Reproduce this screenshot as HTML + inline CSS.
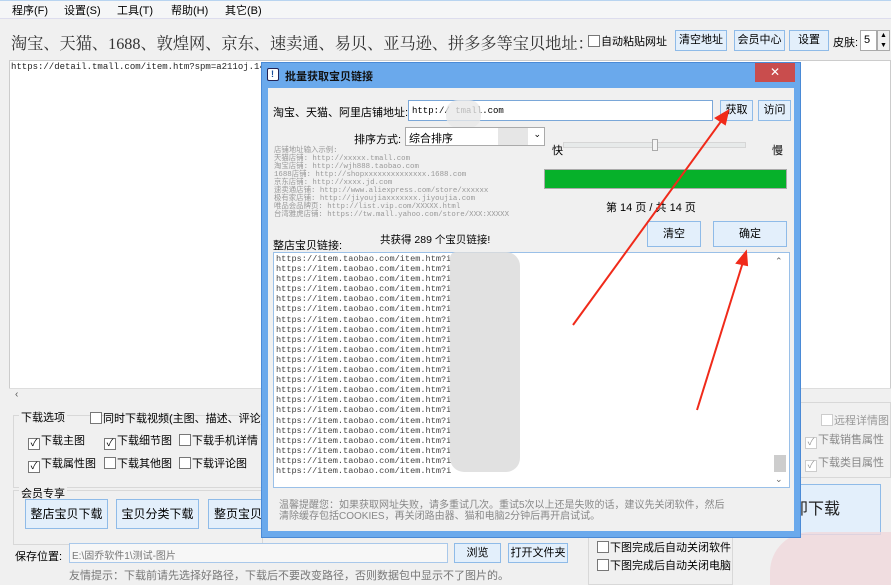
<!DOCTYPE html>
<html><head><meta charset="utf-8"><style>
*{margin:0;padding:0;box-sizing:border-box}
body{width:891px;height:585px;overflow:hidden;background:#f0f0f0;font-family:"Liberation Sans","Noto Sans CJK SC",sans-serif;font-size:11px;color:#000;position:relative}
.a{position:absolute;white-space:nowrap}
.btn{position:absolute;background:#e3effb;border:1px solid #8fbbe8;text-align:center;font-size:11px;white-space:nowrap}
.cb{display:inline-block;width:12px;height:12px;border:1px solid #777;background:#fff;vertical-align:-2px;margin-right:1px;font-size:10px;line-height:10px;text-align:center}
.mono{font-family:"Liberation Mono","Noto Sans CJK SC",monospace}
.grp{position:absolute;border:1px solid #d8d8d8}
</style></head><body>
<div class="a" style="left:0;top:0;width:891px;height:18px;background:#f5f6f7;border-top:1px solid #b8d4f0"></div>
<div class="a" style="left:12px;top:2px;font-size:11px">程序(F)</div>
<div class="a" style="left:64px;top:2px;font-size:11px">设置(S)</div>
<div class="a" style="left:117px;top:2px;font-size:11px">工具(T)</div>
<div class="a" style="left:171px;top:2px;font-size:11px">帮助(H)</div>
<div class="a" style="left:225px;top:2px;font-size:11px">其它(B)</div>
<div class="a" style="left:0;top:18px;width:891px;height:42px;background:#f0f0f0;border-top:1px solid #dde"></div>
<div class="a" style="left:11px;top:30px;font-size:16.2px;font-family:'Liberation Serif','Noto Serif CJK SC',serif;color:#333">淘宝、天猫、1688、敦煌网、京东、速卖通、易贝、亚马逊、拼多多等宝贝地址：</div>
<div class="a" style="left:588px;top:33px;font-size:11px"><span class="cb"></span>自动粘贴网址</div>
<div class="btn" style="left:675px;top:30px;width:52px;height:21px;line-height:19px">清空地址</div>
<div class="btn" style="left:734px;top:30px;width:51px;height:21px;line-height:19px">会员中心</div>
<div class="btn" style="left:789px;top:30px;width:40px;height:21px;line-height:19px">设置</div>
<div class="a" style="left:833px;top:34px">皮肤:</div>
<div class="a" style="left:860px;top:30px;width:17px;height:21px;background:#fff;border:1px solid #aaa;padding-left:3px;line-height:19px">5</div>
<div class="a" style="left:877px;top:30px;width:13px;height:21px;border:1px solid #aaa;font-size:7px;text-align:center;line-height:10px">▲<br>▼</div>
<div class="a" style="left:9px;top:60px;width:882px;height:341px;background:#fff;border:1px solid #ccc"></div>
<div class="a mono" style="left:11px;top:62px;font-size:9px;color:#222">https://detail.tmall.com/item.htm?spm=a211oj.1465</div>
<div class="a" style="left:9px;top:388px;width:882px;height:13px;background:#f0f0f0;border-top:1px solid #ddd;font-size:10px;padding-left:6px;color:#555">‹</div>
<div class="grp" style="left:13px;top:415px;width:250px;height:73px"></div>
<div class="a" style="left:19px;top:409px;background:#f0f0f0;padding:0 2px">下载选项</div>
<div class="a" style="left:90px;top:410px"><span class="cb"></span>同时下载视频(主图、描述、评论)</div>
<div class="a" style="left:28px;top:432px"><span class="cb">✓</span>下载主图</div>
<div class="a" style="left:104px;top:432px"><span class="cb">✓</span>下载细节图</div>
<div class="a" style="left:179px;top:432px"><span class="cb"></span>下载手机详情</div>
<div class="a" style="left:28px;top:455px"><span class="cb">✓</span>下载属性图</div>
<div class="a" style="left:104px;top:455px"><span class="cb"></span>下载其他图</div>
<div class="a" style="left:179px;top:455px"><span class="cb"></span>下载评论图</div>
<div class="grp" style="left:13px;top:490px;width:250px;height:55px"></div>
<div class="a" style="left:19px;top:485px;background:#f0f0f0;padding:0 2px">会员专享</div>
<div class="btn" style="left:25px;top:499px;width:83px;height:30px;line-height:28px;font-size:12px">整店宝贝下载</div>
<div class="btn" style="left:116px;top:499px;width:83px;height:30px;line-height:28px;font-size:12px">宝贝分类下载</div>
<div class="btn" style="left:208px;top:499px;width:60px;height:30px;line-height:28px;font-size:12px">整页宝贝</div>
<div class="a" style="left:15px;top:548px">保存位置:</div>
<div class="a" style="left:69px;top:543px;width:379px;height:20px;background:#f7f7f7;border:1px solid #a9c8ea;font-size:10px;color:#777;padding:3px 2px">E:\固乔软件1\测试-图片</div>
<div class="btn" style="left:454px;top:543px;width:47px;height:20px;line-height:18px">浏览</div>
<div class="btn" style="left:508px;top:543px;width:60px;height:20px;line-height:18px">打开文件夹</div>
<div class="a" style="left:69px;top:567px;color:#777;font-size:11px">友情提示：下载前请先选择好路径，下载后不要改变路径，否则数据包中显示不了图片的。</div>
<div class="grp" style="left:588px;top:535px;width:145px;height:50px"></div>
<div class="a" style="left:597px;top:539px"><span class="cb"></span>下图完成后自动关闭软件</div>
<div class="a" style="left:597px;top:557px"><span class="cb"></span>下图完成后自动关闭电脑</div>
<div class="grp" style="left:800px;top:402px;width:91px;height:76px"></div>
<div class="a" style="left:821px;top:412px;color:#999"><span class="cb" style="border-color:#ccc"></span>远程详情图</div>
<div class="a" style="left:805px;top:431px;color:#888"><span class="cb" style="border-color:#ccc;color:#999">✓</span>下载销售属性</div>
<div class="a" style="left:805px;top:454px;color:#888"><span class="cb" style="border-color:#ccc;color:#999">✓</span>下载类目属性</div>
<div class="btn" style="left:790px;top:484px;width:91px;height:51px;line-height:50px;font-size:16px;text-align:right;padding-right:40px;color:#222">即下载</div>
<div class="a" style="left:770px;top:532px;width:121px;height:53px;background:#f0d8dc;border-radius:40px 0 0 0;opacity:.8"></div>
<div class="a" style="left:261px;top:62px;width:540px;height:476px;background:#6aa9ec;border:1px solid #4a8ad6"></div>
<div class="a" style="left:267px;top:68px;width:12px;height:13px;background:#fff;border:1px solid #225;border-radius:2px"></div>
<div class="a" style="left:271px;top:69px;font-size:9px;font-weight:bold;color:#1a4e9a">!</div>
<div class="a" style="left:285px;top:68px;font-size:11px;font-weight:bold;color:#111">批量获取宝贝链接</div>
<div class="a" style="left:755px;top:63px;width:40px;height:19px;background:#c94d4d;color:#fff;text-align:center;font-size:12px;line-height:18px">✕</div>
<div class="a" style="left:268px;top:88px;width:526px;height:443px;background:#f0f0f0"></div>
<div class="a" style="left:273px;top:104px">淘宝、天猫、阿里店铺地址:</div>
<div class="a mono" style="left:408px;top:100px;width:305px;height:21px;background:#fff;border:1px solid #7aa7d8;font-size:9px;padding:5px 3px">http://        tmall.com</div>
<div class="a" style="left:446px;top:100px;width:35px;height:28px;background:#e8e8e8;border-radius:12px;opacity:.8"></div>
<div class="btn" style="left:720px;top:100px;width:33px;height:21px;line-height:19px">获取</div>
<div class="btn" style="left:758px;top:100px;width:33px;height:21px;line-height:19px">访问</div>
<div class="a" style="left:354px;top:131px">排序方式:</div>
<div class="a" style="left:405px;top:127px;width:140px;height:19px;background:#fff;border:1px solid #aaa;padding:2px 3px;font-size:11px">综合排序<span style="position:absolute;right:3px;top:1px;font-size:9px">⌄</span></div>
<div class="a" style="left:498px;top:128px;width:30px;height:17px;background:#e6e6e6"></div>
<div class="a" style="left:552px;top:142px">快</div>
<div class="a" style="left:563px;top:142px;width:183px;height:6px;background:#e7eaea;border:1px solid #d6d6d6"></div>
<div class="a" style="left:652px;top:139px;width:6px;height:12px;background:#f4f4f4;border:1px solid #aaa"></div>
<div class="a" style="left:772px;top:142px">慢</div>
<div class="a" style="left:544px;top:169px;width:243px;height:20px;background:#06b12a;border:1px solid #aaa"></div>
<div class="a" style="left:606px;top:199px;font-size:11px">第 14 页 / 共 14 页</div>
<div class="a mono" style="left:274px;top:147px;font-size:7.4px;line-height:8px;color:#999">店铺地址输入示例:<br>天猫店铺: http://xxxxx.tmall.com<br>淘宝店铺: http://wjh888.taobao.com<br>1688店铺: http://shopxxxxxxxxxxxxxx.1688.com<br>京东店铺: http://xxxx.jd.com<br>速卖通店铺: http://www.aliexpress.com/store/xxxxxx<br>极有家店铺: http://jiyoujiaxxxxxxx.jiyoujia.com<br>唯品会品牌页: http://list.vip.com/XXXXX.html<br>台湾雅虎店铺: https://tw.mall.yahoo.com/store/XXX:XXXXX</div>
<div class="btn" style="left:647px;top:221px;width:54px;height:26px;line-height:24px">清空</div>
<div class="btn" style="left:713px;top:221px;width:74px;height:26px;line-height:24px">确定</div>
<div class="a" style="left:273px;top:237px">整店宝贝链接:</div>
<div class="a" style="left:380px;top:232px;font-size:10.5px">共获得 289 个宝贝链接!</div>
<div class="a" style="left:273px;top:252px;width:517px;height:236px;background:#fff;border:1px solid #9ac0e8"></div>
<div class="a mono" style="left:276px;top:254px;font-size:8.6px;line-height:10.1px;color:#444">https://item.taobao.com/item.htm?i<br>https://item.taobao.com/item.htm?i<br>https://item.taobao.com/item.htm?i<br>https://item.taobao.com/item.htm?i<br>https://item.taobao.com/item.htm?i<br>https://item.taobao.com/item.htm?i<br>https://item.taobao.com/item.htm?i<br>https://item.taobao.com/item.htm?i<br>https://item.taobao.com/item.htm?i<br>https://item.taobao.com/item.htm?i<br>https://item.taobao.com/item.htm?i<br>https://item.taobao.com/item.htm?i<br>https://item.taobao.com/item.htm?i<br>https://item.taobao.com/item.htm?i<br>https://item.taobao.com/item.htm?i<br>https://item.taobao.com/item.htm?i<br>https://item.taobao.com/item.htm?i<br>https://item.taobao.com/item.htm?i<br>https://item.taobao.com/item.htm?i<br>https://item.taobao.com/item.htm?i<br>https://item.taobao.com/item.htm?i<br>https://item.taobao.com/item.htm?i</div>
<div class="a" style="left:450px;top:252px;width:70px;height:220px;background:#dcdcdc;border-radius:6px 14px 14px 14px;opacity:.85"></div>
<div class="a" style="left:775px;top:256px;font-size:9px;color:#666">⌃</div>
<div class="a" style="left:774px;top:455px;width:12px;height:17px;background:#cdcdcd"></div>
<div class="a" style="left:775px;top:474px;font-size:9px;color:#666">⌄</div>
<div class="a" style="left:279px;top:500px;font-size:10px;line-height:11px;color:#888">温馨提醒您：如果获取网址失败，请多重试几次。重试5次以上还是失败的话，建议先关闭软件，然后<br>清除缓存包括COOKIES，再关闭路由器、猫和电脑2分钟后再开启试试。</div>
<svg class="a" style="left:0;top:0" width="891" height="585"><g stroke="#f02a1a" stroke-width="2" fill="#f02a1a"><line x1="573" y1="325" x2="722" y2="120"/><polygon points="728,111 716,118 725,124"/><line x1="697" y1="410" x2="743" y2="262"/><polygon points="746,252 737,263 747,265"/></g></svg>
</body></html>
